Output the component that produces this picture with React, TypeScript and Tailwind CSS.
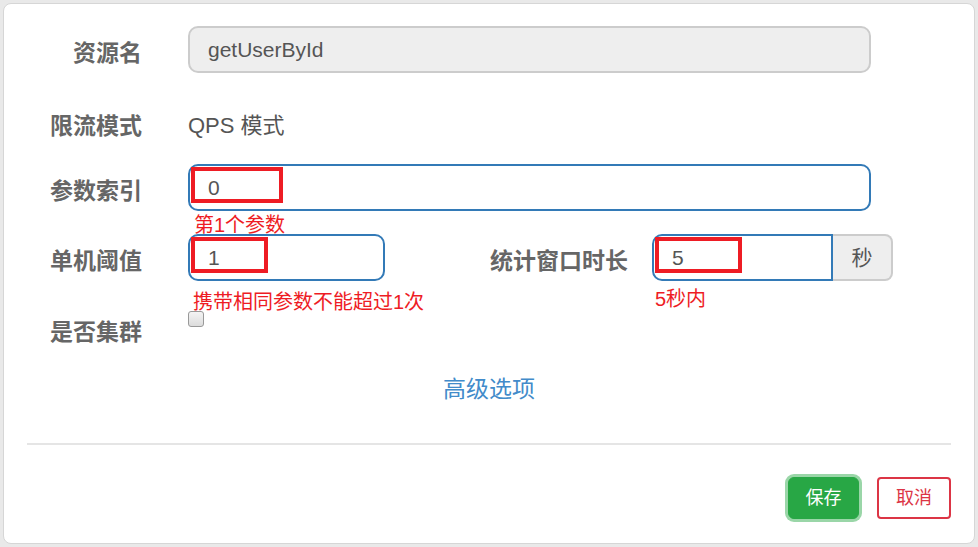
import React from "react";

const font = "font-['Liberation_Sans','Noto_Sans_CJK_SC',sans-serif]";

const Label = ({ text, className = "" }: { text: string; className?: string }) => (
  <div className={`w-[138px] shrink-0 text-right text-[23px] font-bold text-[#666] ${className}`}>{text}</div>
);

const Mark = ({ className }: { className: string }) => (
  <div className={`absolute top-[1px] left-[1px] h-[36px] border-4 border-[#ee1c24] ${className}`} />
);

const App = () => {
  return (
    <div className={`h-[547px] w-[978px] bg-[#e9e9e9] p-[3px] ${font}`}>
      <div className="flex h-[541px] flex-col rounded-lg border border-[#d6d6d6] bg-white">
        {/* 资源名 */}
        <div className="mt-[22px] flex items-center">
          <Label text="资源名" className="pt-[8px]" />
          <div className="ml-[46px] flex h-[47px] w-[683px] items-center rounded-[10px] border-2 border-[#ccc] bg-[#eee] pl-[18px] text-[21px] text-[#555]">
            getUserById
          </div>
        </div>

        {/* 限流模式 */}
        <div className="mt-[29px] flex h-[47px] items-center">
          <Label text="限流模式" className="pt-[2px]" />
          <div className="ml-[46px] text-[22px] text-[#555]">QPS 模式</div>
        </div>

        {/* 参数索引 */}
        <div className="mt-[15px] flex items-center">
          <Label text="参数索引" className="pt-[8px]" />
          <div className="relative ml-[46px] flex h-[47px] w-[683px] items-center rounded-[10px] border-2 border-[#337ab7] pl-[18px] text-[21px] text-[#555]">
            0
            <Mark className="w-[92px]" />
          </div>
        </div>
        <div className="mt-[4px] pl-[190px] text-[20px] leading-[20px] text-[#ee1c24]">第1个参数</div>

        {/* 单机阈值 / 统计窗口时长 */}
        <div className="mt-[-1px] flex items-center">
          <Label text="单机阈值" className="pt-[8px]" />
          <div className="relative ml-[46px] flex h-[47px] w-[197px] items-center rounded-[10px] border-2 border-[#337ab7] pl-[18px] text-[21px] text-[#555]">
            1
            <Mark className="w-[77px]" />
          </div>
          <div className="w-[243px] pt-[8px] text-right text-[23px] font-bold text-[#666]">统计窗口时长</div>
          <div className="ml-[24px] flex h-[47px]">
            <div className="relative flex w-[181px] items-center rounded-l-[10px] border-2 border-[#337ab7] pl-[18px] text-[21px] text-[#555]">
              5
              <Mark className="w-[87px]" />
            </div>
            <div className="flex w-[60px] items-center justify-center rounded-r-[8px] border-2 border-l-0 border-[#ccc] bg-[#eee] text-[21px] text-[#555]">
              秒
            </div>
          </div>
        </div>
        <div className="flex text-[20px] leading-[20px] text-[#ee1c24]">
          <div className="mt-[11px] w-[648px] shrink-0 whitespace-nowrap pl-[189px]">携带相同参数不能超过1次</div>
          <div className="mt-[8px] pl-[3px]">5秒内</div>
        </div>

        {/* 是否集群 */}
        <div className="flex h-[40px]">
          <Label text="是否集群" className="leading-[40px]" />
          <div className="ml-[46px] mt-[-1px] h-[16px] w-[16px] rounded-[3px] border border-[#999] bg-gradient-to-b from-[#f4f4f4] to-[#dcdcdc]" />
        </div>

        <div className="mt-[22px] text-center text-[23px] leading-[30px] text-[#428bca]">高级选项</div>

        <div className="mx-[23px] mt-[39px] h-[2px] bg-[#e5e5e5]" />

        <div className="mr-[23px] mt-[32px] flex items-center justify-end">
          <button className="h-[42px] w-[71px] rounded-[6px] border border-[#28a745] bg-[#28a745] text-[18px] text-white shadow-[0_0_0_3px_#9ad6a8]">
            保存
          </button>
          <button className="ml-[18px] h-[42px] w-[74px] rounded-[4px] border-2 border-[#dc3545] bg-white text-[18px] text-[#dc3545]">
            取消
          </button>
        </div>
      </div>
    </div>
  );
};

export default App;
